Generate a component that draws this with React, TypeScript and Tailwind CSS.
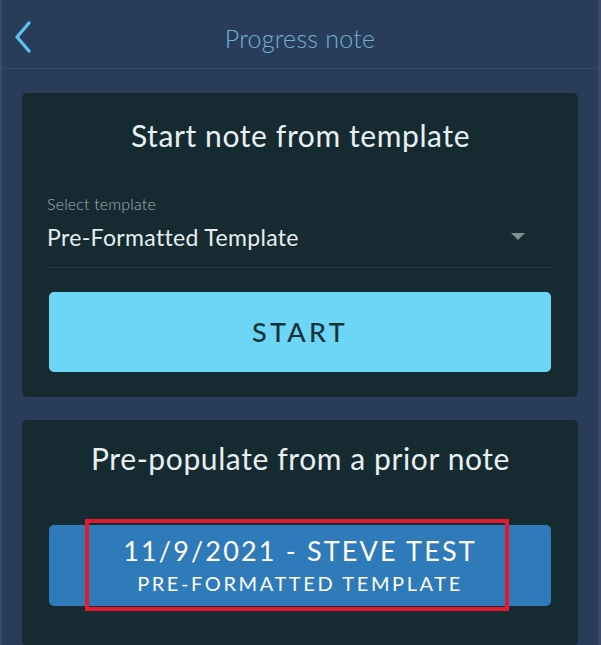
import React from "react"

export default function App() {
  return (
    <div className="w-[601px] h-[645px] overflow-hidden bg-[#293c59] font-['Lato','Noto_Sans',sans-serif] border-l-2 border-r-[3px] border-l-[#3a4c68] border-r-[#3a4c68]">
      {/* Header */}
      <div className="h-[69px] grid grid-cols-[48px_1fr_48px] items-center border-b border-[#35496a]">
        <div className="flex justify-start pt-[6px] pl-[11px]">
          <svg width="20" height="34" viewBox="0 0 20 34" fill="none">
            <path d="M16 3 L4 17 L16 31" stroke="#5cc1ec" strokeWidth="3.4" strokeLinecap="round" strokeLinejoin="round" />
          </svg>
        </div>
        <h1 className="text-center text-[25px] font-light text-[#6db3d6] pt-[9px] tracking-[0.01em]">Progress note</h1>
        <div />
      </div>

      <div className="px-[20px] pt-[24px] flex flex-col gap-[23px]">
        {/* Template card */}
        <div className="bg-[#162b31] rounded-[5px] pt-[24px] pb-[25px] pl-[25px] pr-[24px]">
          <h2 className="text-center text-[30px] leading-[36px] tracking-[0.02em] text-[#e9f0f1]">Start note from template</h2>

          <div className="mt-[41px] border-b border-[#24393f] pb-[16px]">
            <div className="text-[16px] leading-[20px] text-[#a3b2b5] font-light tracking-[0.01em]">Select template</div>
            <div className="mt-[9px] flex items-center justify-between">
              <span className="text-[23px] leading-[28px] tracking-[0.015em] text-[#e6eef0]">Pre-Formatted Template</span>
              <svg width="14" height="8" viewBox="0 0 14 8" className="mr-[29px]">
                <path d="M0 0 H14 L7 7 Z" fill="#7c8f95" />
              </svg>
            </div>
          </div>

          <button className="mt-[24px] ml-[2px] w-[502px] h-[80px] rounded-[5px] bg-[#6dd5f6] text-[#16323b] text-[27px] font-medium tracking-[0.12em]">
            START
          </button>
        </div>

        {/* Prior note card */}
        <div className="bg-[#162b31] rounded-[5px] pt-[20px] pb-[40px] pl-[25px] pr-[24px]">
          <h2 className="text-center text-[30px] leading-[36px] tracking-[0.02em] text-[#e9f0f1]">Pre-populate from a prior note</h2>

          <div className="relative mt-[49px] ml-[2px] w-[502px]">
            <button className="w-full h-[81px] rounded-[5px] bg-[#2f7ab8] text-white flex flex-col items-center justify-center pt-[5px]">
              <span className="text-[27px] leading-[30px] tracking-[0.08em]">11/9/2021 - STEVE TEST</span>
              <span className="text-[20px] leading-[34px] tracking-[0.13em]">PRE-FORMATTED TEMPLATE</span>
            </button>
            <div className="absolute left-[36px] top-[-6px] w-[424px] h-[92px] border-4 border-[#e2192f]" />
          </div>
        </div>
      </div>
    </div>
  )
}
